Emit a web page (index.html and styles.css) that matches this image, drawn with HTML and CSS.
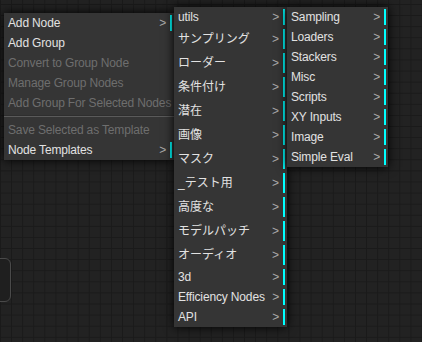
FILE: index.html
```html
<!DOCTYPE html>
<html>

<head lang="en">
    <meta charset="UTF-8">
    <title>Context menu</title>
    <link rel="stylesheet" href="styles.css">
</head>

<body>

    <div class="canvas">
        <!--node behind the menu-->
        <div class="node"></div>

        <!--main menu-->
        <div class="menu menu-main">
            <div class="entry sub">Add Node<span class="arrow">&gt;</span></div>
            <div class="entry">Add Group</div>
            <div class="entry disabled">Convert to Group Node</div>
            <div class="entry disabled">Manage Group Nodes</div>
            <div class="entry disabled">Add Group For Selected Nodes</div>
            <div class="separator"></div>
            <div class="entry disabled">Save Selected as Template</div>
            <div class="entry sub">Node Templates<span class="arrow">&gt;</span></div>
        </div>

        <!--Add Node-->
        <div class="menu menu-nodes">
            <div class="entry sub">utils<span class="arrow">&gt;</span></div>
            <div class="entry sub jp">サンプリング<span class="arrow">&gt;</span></div>
            <div class="entry sub jp">ローダー<span class="arrow">&gt;</span></div>
            <div class="entry sub jp">条件付け<span class="arrow">&gt;</span></div>
            <div class="entry sub jp">潜在<span class="arrow">&gt;</span></div>
            <div class="entry sub jp">画像<span class="arrow">&gt;</span></div>
            <div class="entry sub jp">マスク<span class="arrow">&gt;</span></div>
            <div class="entry sub jp">_テスト用<span class="arrow">&gt;</span></div>
            <div class="entry sub jp">高度な<span class="arrow">&gt;</span></div>
            <div class="entry sub jp">モデルパッチ<span class="arrow">&gt;</span></div>
            <div class="entry sub jp">オーディオ<span class="arrow">&gt;</span></div>
            <div class="entry sub">3d<span class="arrow">&gt;</span></div>
            <div class="entry sub">Efficiency Nodes<span class="arrow">&gt;</span></div>
            <div class="entry sub">API<span class="arrow">&gt;</span></div>
        </div>

        <!--utils-->
        <div class="menu menu-utils">
            <div class="entry sub">Sampling<span class="arrow">&gt;</span></div>
            <div class="entry sub">Loaders<span class="arrow">&gt;</span></div>
            <div class="entry sub">Stackers<span class="arrow">&gt;</span></div>
            <div class="entry sub">Misc<span class="arrow">&gt;</span></div>
            <div class="entry sub">Scripts<span class="arrow">&gt;</span></div>
            <div class="entry sub">XY Inputs<span class="arrow">&gt;</span></div>
            <div class="entry sub">Image<span class="arrow">&gt;</span></div>
            <div class="entry sub">Simple Eval<span class="arrow">&gt;</span></div>
        </div>
    </div>

</body>

</html>
```

FILE: styles.css
```css
* {
    padding: 0;
    margin: 0;
    box-sizing: border-box;
}

body {
    background-color: #222;
    font: 12px "Liberation Sans", "Noto Sans CJK JP", sans-serif;
    overflow: hidden;
}

.canvas {
    position: relative;
    width: 422px;
    height: 342px;
    background-color: #222;
    background-image:
        linear-gradient(to right, #1a1a1a 1px, transparent 1px),
        linear-gradient(to bottom, #1a1a1a 1px, transparent 1px);
    background-size: 11.1px 11.1px;
    background-position: 0 4px;
}

.node {
    position: absolute;
    left: -20px;
    top: 258px;
    width: 31px;
    height: 44px;
    border: 1px solid #4a4a4a;
    border-radius: 6px;
    background-color: #1f1f1f;
}

.menu {
    position: absolute;
    display: flex;
    flex-direction: column;
    background-color: #353535;
    box-shadow: 0 0 10px #000;
    color: #e2e2e2;
}

.menu-main {
    left: 4px;
    top: 13px;
    width: 170px;
}

.menu-nodes {
    left: 174px;
    top: 7px;
    width: 113px;
}

.menu-utils {
    left: 287px;
    top: 7px;
    width: 101px;
}

.entry {
    display: flex;
    justify-content: space-between;
    height: 16px;
    line-height: 16px;
    margin: 2px;
    padding-left: 2px;
    letter-spacing: -0.15px;
    white-space: nowrap;
}

.entry.jp {
    height: 20px;
    line-height: 20px;
    letter-spacing: 0;
}

.entry.sub {
    border-right: 2px solid cyan;
}

.entry.disabled {
    color: #6e6e6e;
}

.arrow {
    color: #aaa;
    padding-right: 4px;
    padding-left: 4px;
}

.separator {
    border-top: 1px solid #2e2e2e;
    border-bottom: 1px solid #5a5a5a;
    margin: 2px 0 3px;
    height: 0;
}
```
